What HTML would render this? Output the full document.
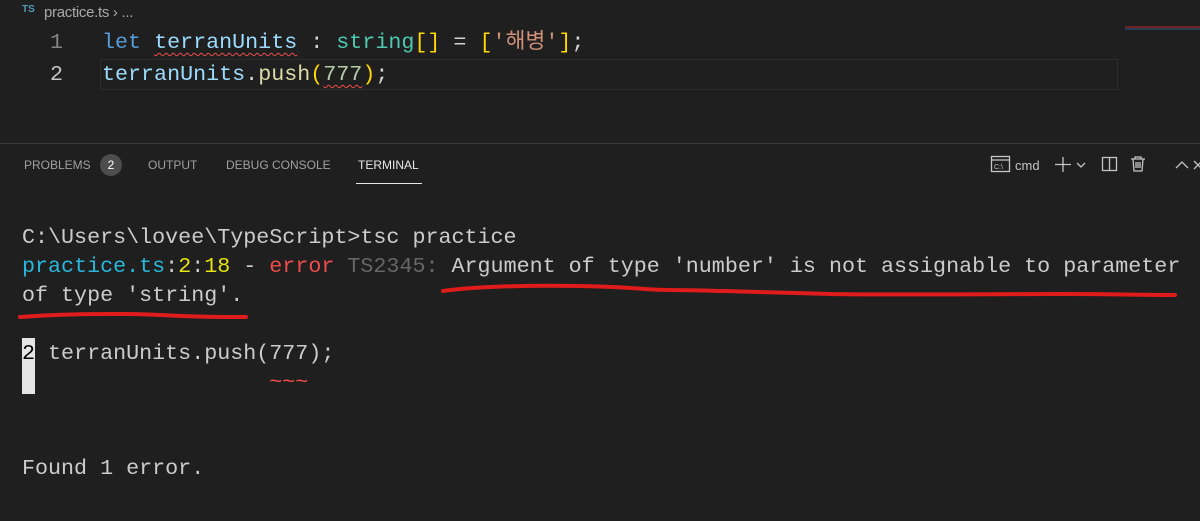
<!DOCTYPE html>
<html><head><meta charset="utf-8"><style>
body{margin:0;width:1200px;height:521px;background:#1f1f1f;overflow:hidden;position:relative;font-family:"Liberation Sans",sans-serif}
.m{position:absolute;font-family:"Liberation Mono","Noto Sans CJK KR",monospace;font-size:21.7px;line-height:30px;white-space:pre;color:#cccccc}
.a{position:absolute}
.sq{text-decoration:underline wavy #f14c4c;text-decoration-thickness:1px;text-underline-offset:4px}
.t{position:absolute;top:158px;font-size:12px;color:#a0a0a0}
</style></head><body>
<div class="a" style="left:22px;top:4px;font-size:10px;font-weight:bold;color:#519aba">TS</div>
<div class="a" style="left:44px;top:4px;font-size:15px;color:#a9a9a9;letter-spacing:-0.3px">practice.ts › ...</div>
<div class="a" style="left:100px;top:59px;width:1016px;height:29px;border:1px solid #2d2d2d"></div>
<div class="a" style="left:1125px;top:26px;width:75px;height:2px;background:#6b2222"></div>
<div class="a" style="left:1125px;top:28px;width:75px;height:2px;background:#2a3a50"></div>
<div class="m" style="left:50px;top:28px;color:#858585">1</div>
<div class="m" style="left:50px;top:60px;color:#c6c6c6">2</div>
<div class="m" style="left:102px;top:28px"><span style="color:#569cd6">let</span> <span class="sq" style="color:#9cdcfe">terranUnits</span> <span style="color:#d4d4d4">:</span> <span style="color:#4ec9b0">string</span><span style="color:#ffd700">[]</span> <span style="color:#d4d4d4">=</span> <span style="color:#ffd700">[</span><span style="color:#ce9178">'해병'</span><span style="color:#ffd700">]</span><span style="color:#d4d4d4">;</span></div>
<div class="m" style="left:102px;top:60px"><span style="color:#9cdcfe">terranUnits</span><span style="color:#d4d4d4">.</span><span style="color:#dcdcaa">push</span><span style="color:#ffd700">(</span><span class="sq" style="color:#b5cea8">777</span><span style="color:#ffd700">)</span><span style="color:#d4d4d4">;</span></div>
<div class="a" style="left:0;top:143px;width:1200px;height:1px;background:#3a3a3a"></div>
<div class="t" style="left:24px">PROBLEMS</div>
<div class="a" style="left:100px;top:154px;width:22px;height:22px;border-radius:11px;background:#4d4d4d;color:#fff;font-size:12px;text-align:center;line-height:22px">2</div>
<div class="t" style="left:148px">OUTPUT</div>
<div class="t" style="left:226px">DEBUG CONSOLE</div>
<div class="t" style="left:358px;color:#e7e7e7">TERMINAL</div>
<div class="a" style="left:356px;top:183px;width:66px;height:1px;background:#e7e7e7"></div>
<svg class="a" style="left:990px;top:154px" width="210" height="24" viewBox="0 0 210 24" fill="none" stroke="#c5c5c5" stroke-width="1.3">
<rect x="1.5" y="2.5" width="18" height="15"/><line x1="1.5" y1="6" x2="19.5" y2="6"/>
<text x="4" y="15" font-size="7" fill="#c5c5c5" stroke="none" font-family="Liberation Sans">C:\</text>
<text x="25" y="16" font-size="13" fill="#c5c5c5" stroke="none" font-family="Liberation Sans">cmd</text>
<path d="M73 3v15M65 10.5h16"/><path d="M87 9l4 4 4-4"/>
<rect x="112.5" y="3.5" width="14" height="13"/><line x1="119.5" y1="3.5" x2="119.5" y2="16.5"/>
<path d="M141 5h14M145 5V3h6v2M143 5l1 12h8l1-12M146 8v6M148 8v6M150 8v6"/>
<path d="M186 14l6-6 6 6"/><path d="M204 7l8 8M212 7l-8 8"/>
</svg>
<div class="m" style="left:22px;top:223px">C:\Users\lovee\TypeScript&gt;tsc practice</div>
<div class="m" style="left:22px;top:252px"><span style="color:#29b8db">practice.ts</span>:<span style="color:#e5e510">2</span>:<span style="color:#e5e510">18</span> - <span style="color:#f14c4c">error</span> <span style="color:#666666">TS2345:</span> Argument of type 'number' is not assignable to parameter</div>
<div class="m" style="left:22px;top:281px">of type 'string'.</div>
<div class="a" style="left:22px;top:338px;width:13px;height:56px;background:#e5e5e5"></div>
<div class="m" style="left:22px;top:339px"><span style="color:#000">2</span> terranUnits.push(777);</div>
<div class="m" style="left:22px;top:368px;color:#f14c4c">                   ~~~</div>
<div class="m" style="left:22px;top:454px">Found 1 error.</div>
<svg class="a" style="left:0;top:0" width="1200" height="521" fill="none" stroke="#e01b1b" stroke-width="4" stroke-linecap="round">
<path d="M443 291C470 287 520 285 580 286S640 290 670 290S790 293 830 294S1000 294 1060 294S1140 295 1175 295"/>
<path d="M20 317C60 314 120 313 160 315S220 317 246 317"/>
</svg>
</body></html>
